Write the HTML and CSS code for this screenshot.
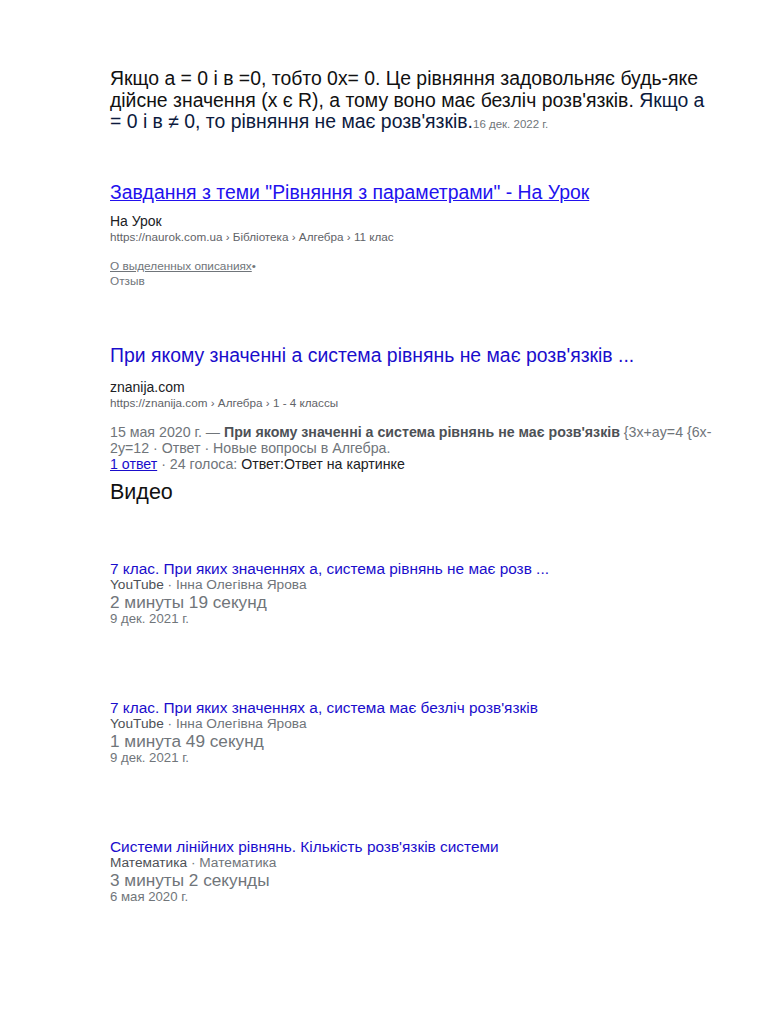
FILE: index.html
```html
<!DOCTYPE html>
<html lang="uk">
<head>
    <meta charset="UTF-8">
    <meta name="viewport" content="width=device-width, initial-scale=1.0">
    <title>Рівняння з параметрами</title>
    <link rel="stylesheet" href="styles.css">
</head>

<body>
    <div class="page">
        <p class="answer">
            Якщо а = 0 і в =0, тобто 0х= 0. Це рівняння задовольняє будь-яке дійсне значення (х є R), а тому воно має безліч розв'язків. <span class="hl">Якщо а = 0 і в ≠ 0, то рівняння не має розв'язків.</span><span class="answer-date">16 дек. 2022 г.</span>
        </p>

        <div class="result result-first">
            <a class="result-title underlined" href="#">Завдання з теми "Рівняння з параметрами" - На Урок</a>
            <div class="site">На Урок</div>
            <div class="url">https://naurok.com.ua › Бібліотека › Алгебра › 11 клас</div>
            <div class="about">
                <a href="#">О выделенных описаниях</a>•
                <div>Отзыв</div>
            </div>
        </div>

        <div class="result">
            <a class="result-title" href="#">При якому значенні а система рівнянь не має розв'язків ...</a>
            <div class="site site-spaced">znanija.com</div>
            <div class="url">https://znanija.com › Алгебра › 1 - 4 классы</div>
            <p class="snippet">
                15 мая 2020 г. — <b>При якому значенні а система рівнянь не має розв'язків</b> {3x+ay=4 {6x-2y=12 · Ответ · Новые вопросы в Алгебра.<br>
                <a href="#">1 ответ</a> · 24 голоса: <span class="dark">Ответ:Ответ на картинке</span>
            </p>
        </div>

        <h2 class="section">Видео</h2>

        <div class="videos">
            <div class="video">
                <a class="video-title" href="#">7 клас. При яких значеннях а, система рівнянь не має розв ...</a>
                <div class="source"><span class="dark">YouTube</span> · Інна Олегівна Ярова</div>
                <div class="duration">2 минуты 19 секунд</div>
                <div class="date">9 дек. 2021 г.</div>
            </div>
            <div class="video">
                <a class="video-title" href="#">7 клас. При яких значеннях а, система має безліч розв'язків</a>
                <div class="source"><span class="dark">YouTube</span> · Інна Олегівна Ярова</div>
                <div class="duration">1 минута 49 секунд</div>
                <div class="date">9 дек. 2021 г.</div>
            </div>
            <div class="video">
                <a class="video-title" href="#">Системи лінійних рівнянь. Кількість розв'язків системи</a>
                <div class="source"><span class="dark">Математика</span> · Математика</div>
                <div class="duration">3 минуты 2 секунды</div>
                <div class="date">6 мая 2020 г.</div>
            </div>
        </div>
    </div>
</body>
</html>
```

FILE: styles.css
```css
body {
    font-family: "Liberation Sans", Arial, sans-serif;
    background-color: #ffffff;
    color: #202124;
    margin: 0;
}

a {
    color: #1a0dab;
    text-decoration: none;
}

.page {
    padding: 68px 48px 0 110px;
}

.answer {
    font-size: 19.4px;
    line-height: 21.5px;
    color: #111111;
    margin: 0;
}

.answer .hl {
    color: #0c1a3d;
}

.answer-date {
    font-size: 11.5px;
    color: #70757a;
}

.result {
    margin-top: 55px;
}

.result-first {
    margin-top: 45px;
}

.result-title {
    display: block;
    font-size: 19.4px;
    line-height: 22px;
    color: #1a0dcc;
}

.result-title.underlined {
    color: #2211ee;
    text-decoration: underline;
}

.site {
    font-size: 14px;
    line-height: 16px;
    color: #202124;
    margin-top: 10px;
}

.site.site-spaced {
    margin-top: 13px;
}

.url {
    font-size: 11.7px;
    line-height: 15px;
    color: #5f6368;
}

.about {
    font-size: 11.8px;
    line-height: 15px;
    color: #70757a;
    margin-top: 15px;
}

.about a {
    color: #70757a;
    text-decoration: underline;
}

.snippet {
    font-size: 14.2px;
    line-height: 16px;
    color: #70757a;
    margin: 14px 0 0;
}

.snippet b {
    color: #4d5156;
}

.snippet a {
    color: #1a0dcc;
    text-decoration: underline;
}

.dark {
    color: #202124;
}

.section {
    font-size: 21.5px;
    font-weight: normal;
    line-height: 24px;
    color: #111111;
    margin: 8px 0 0;
}

.videos {
    display: flex;
    flex-direction: column;
    gap: 74px;
    margin-top: 57px;
}

.video-title {
    display: block;
    font-size: 15.4px;
    line-height: 16px;
    color: #1a0dcc;
}

.source {
    font-size: 13.7px;
    line-height: 16px;
    color: #70757a;
}

.source .dark {
    color: #4d5156;
}

.duration {
    font-size: 17.2px;
    line-height: 19px;
    color: #70757a;
}

.date {
    font-size: 13.2px;
    line-height: 14px;
    color: #70757a;
}
```
